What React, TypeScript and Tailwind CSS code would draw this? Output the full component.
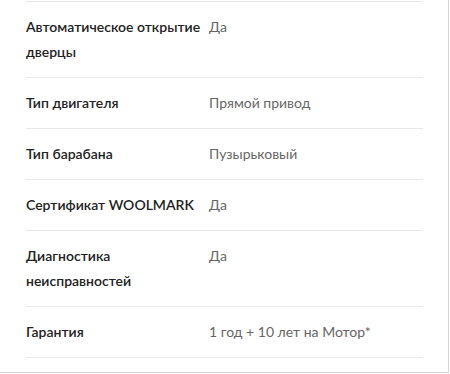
import React from "react";

const rows: [string, string][] = [
  ["Автоматическое открытие дверцы", "Да"],
  ["Тип двигателя", "Прямой привод"],
  ["Тип барабана", "Пузырьковый"],
  ["Сертификат WOOLMARK", "Да"],
  ["Диагностика неисправностей", "Да"],
  ["Гарантия", "1 год + 10 лет на Мотор*"],
];

export default function App() {
  return (
    <div
      className="w-[450px] h-[374px] bg-white"
      style={{ fontFamily: 'Lato, "Noto Sans", sans-serif' }}
    >
      <div className="w-[449px] h-[373px] border-r border-b border-[#d6d6d6] pl-[26px] pr-[25px] pt-px">
        <div className="border-t border-[#e8e8e8]">
          {rows.map(([k, v]) => (
            <div
              key={k}
              className="flex border-b border-[#e8e8e8] pt-[12px] pb-[13px] text-[14px] leading-[25px]"
            >
              <div className="w-[183px] shrink-0 pr-[6px] font-semibold text-[#222222]">{k}</div>
              <div className="flex-1 text-[#666666] font-normal">{v}</div>
            </div>
          ))}
        </div>
      </div>
    </div>
  );
}
